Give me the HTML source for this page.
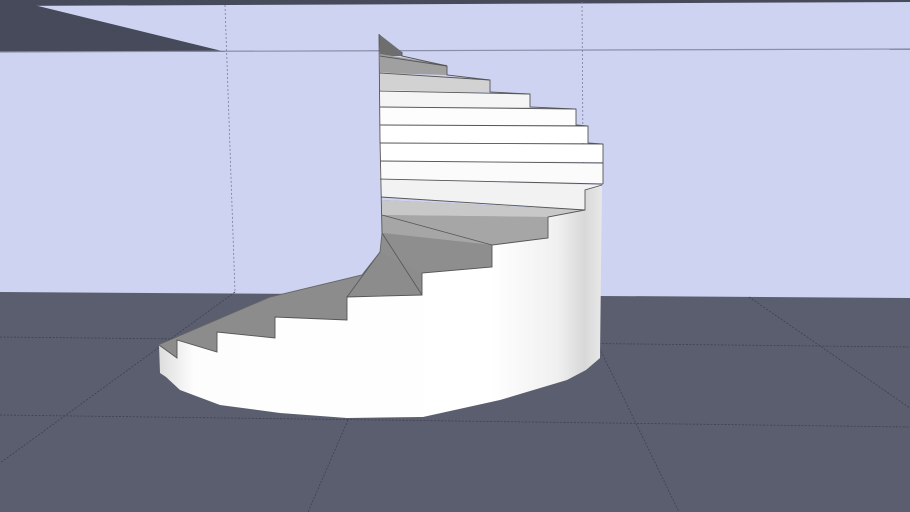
<!DOCTYPE html>
<html><head><style>
html,body{margin:0;padding:0;width:910px;height:512px;overflow:hidden;background:#cdd3f0}
svg{display:block}
</style></head><body>
<svg width="910" height="512" viewBox="0 0 910 512" xmlns="http://www.w3.org/2000/svg">
<defs>
<linearGradient id="cyl" x1="158" y1="0" x2="602" y2="0" gradientUnits="userSpaceOnUse">
<stop offset="0" stop-color="#dcdcdc"/>
<stop offset="0.08" stop-color="#fdfdfd"/>
<stop offset="0.75" stop-color="#ffffff"/>
<stop offset="0.9" stop-color="#f0f0f0"/>
<stop offset="0.96" stop-color="#d8d8d8"/>
<stop offset="1" stop-color="#e8e8e8"/>
</linearGradient>
</defs>
<!-- sky -->
<rect width="910" height="512" fill="#cdd3f0"/>
<!-- top dark strip -->
<polygon points="0,0 910,0 910,2 0,6" fill="#474a5a"/>
<polygon points="0,5 34,5 226,52 0,52" fill="#474a5a"/>
<line x1="0" y1="52" x2="910" y2="49" stroke="#8a8fa8" stroke-width="1.2"/>
<!-- vertical dotted axes -->
<line x1="225" y1="5" x2="235" y2="292" stroke="#7a7f95" stroke-width="0.8" stroke-dasharray="2,2"/>
<line x1="582" y1="2" x2="584" y2="296" stroke="#7a7f95" stroke-width="0.8" stroke-dasharray="2,2"/>
<!-- floor -->
<polygon points="0,292 910,298 910,512 0,512" fill="#5b5e6e"/>
<g stroke="#3e4150" stroke-width="0.8" stroke-dasharray="2,1.5" fill="none">
<line x1="0" y1="337" x2="910" y2="347"/>
<line x1="0" y1="415" x2="910" y2="427"/>
<line x1="235" y1="292" x2="0" y2="463"/>
<line x1="749" y1="297" x2="910" y2="408"/>
<line x1="348" y1="420" x2="308" y2="512"/>
<line x1="598" y1="345" x2="679" y2="512"/>
</g>
<!-- grey lower treads region -->
<polygon points="158,345 270,297 362,275 380,252 382,233 382,200 585,210 585,215 548,217 548,238 492,245 492,267 422,273 422,295 347,297 347,320 275,317 275,338 217,332 217,352 177,340 177,358 159,345" fill="#8c8c8c"/>
<!-- lighter treads near column -->
<polygon points="382,215 548,217 548,238 492,245 382,233" fill="#a6a6a6"/>
<polygon points="382,233 492,245 492,267 422,273 380,252" fill="#8e8e8e"/>
<polygon points="382,200 585,210 548,217 382,215" fill="#c8c8c8"/>
<g stroke="#555" stroke-width="0.8">
<line x1="382" y1="233" x2="422" y2="295"/>
<line x1="380" y1="252" x2="347" y2="297"/>
<line x1="382" y1="215" x2="492" y2="245"/>
</g>
<!-- white cylinder -->
<polygon fill="url(#cyl)" points="159,345 177,358 177,340 217,352 217,332 275,338 275,317 347,320 347,297 422,295 422,273 492,267 492,245 548,238 548,217 585,210 585,190 602,185 600,358 586,370 567,380 500,400 423,417 347,418 280,413 220,405 180,390 166,377 160,373"/>
<!-- upper steps -->
<polygon points="379,34 402,52 402,56 380,56" fill="#6e6e6e"/>
<polygon points="380,54 447,65 447,75 380,73" fill="#a0a0a0"/>
<polygon points="380,72 490,80 490,92 380,91" fill="#d2d2d2"/>
<polygon points="380,90 530,94 530,107 380,107" fill="#f5f5f5"/>
<polygon points="380,107 576,109 576,125 380,125" fill="#fdfdfd"/>
<polygon points="380,125 588,126 588,143 380,143" fill="#ffffff"/>
<polygon points="380,143 603,144 603,162 380,161" fill="#ffffff"/>
<polygon points="380,161 603,163 603,184 380,179" fill="#fbfbfb"/>
<polygon points="380,179 603,185 585,190 585,210 381,197" fill="#f2f2f2"/>
<g stroke="#555" stroke-width="0.9" fill="none">
<line x1="380" y1="56" x2="447" y2="66"/>
<line x1="380" y1="73" x2="490" y2="80"/>
<line x1="380" y1="91" x2="530" y2="94"/>
<line x1="380" y1="107" x2="576" y2="109"/>
<line x1="380" y1="125" x2="588" y2="126"/>
<line x1="380" y1="143" x2="603" y2="144"/>
<line x1="380" y1="161" x2="603" y2="163"/>
<line x1="380" y1="179" x2="603" y2="184"/>
<line x1="381" y1="197" x2="585" y2="210"/>
<polyline points="402,52 402,56 447,66 447,75 490,80 490,92 530,94 530,107 576,109 576,125 588,126 588,143 603,144 603,184"/>
<polyline points="379,34 380,140 382,233"/>
<polyline points="159,345 177,358 177,340 217,352 217,332 275,338 275,317 347,320 347,297 422,295 422,273 492,267 492,245 548,238 548,217 585,210 585,190 602,185"/>
<polyline points="158,345 270,297 362,275 380,252 382,233" stroke="#666"/>
</g>
</svg>
</body></html>
